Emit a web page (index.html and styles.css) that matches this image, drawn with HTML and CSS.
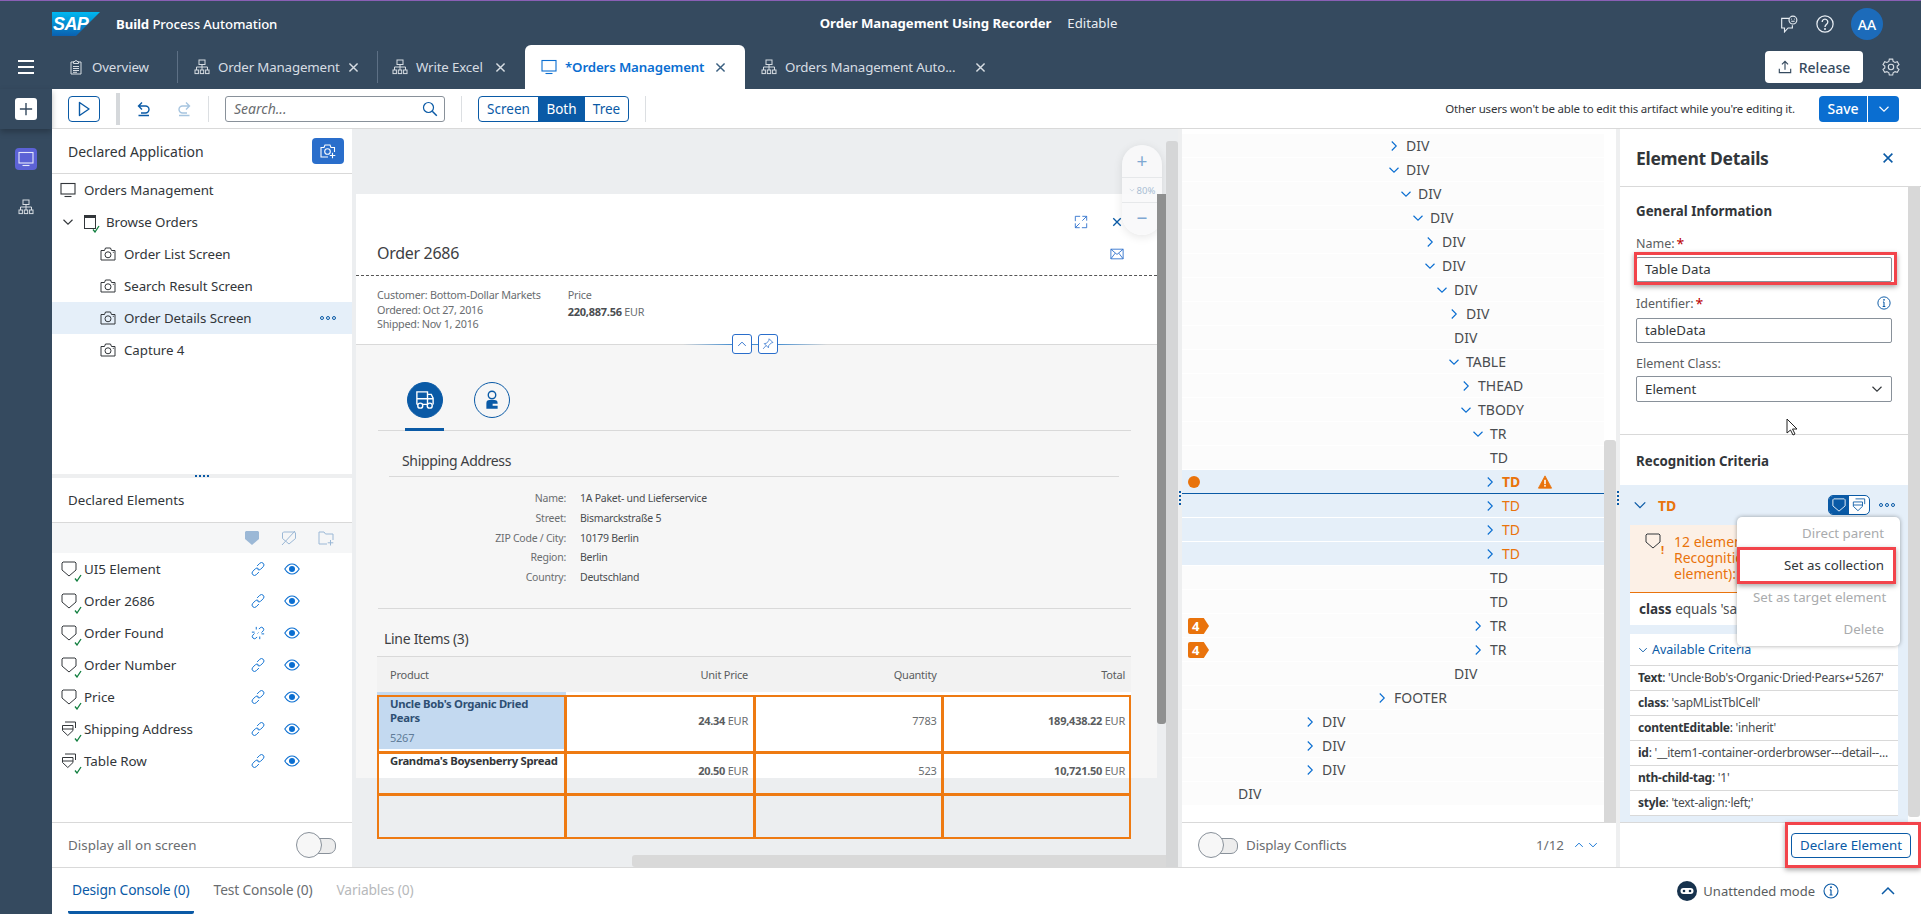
FILE: index.html
```html
<!DOCTYPE html>
<html lang="en">
<head>
<meta charset="utf-8">
<title>Build Process Automation</title>
<link rel="stylesheet" href="styles.css">
</head>
<body>
<svg class="defs" width="0" height="0" aria-hidden="true">
  <symbol id="i-monitor" viewBox="0 0 16 16"><rect x="1" y="1.5" width="14" height="10.5" fill="none" stroke="currentColor" stroke-width="1.1"/><path d="M4.5 14.5h7" stroke="currentColor" stroke-width="1.1"/></symbol>
  <symbol id="i-org" viewBox="0 0 16 16"><g fill="none" stroke="currentColor" stroke-width="1"><rect x="5" y="1" width="6" height="4.5"/><path d="M8 5.5V8M2.5 11V8h11v3M8 8v3"/><rect x="1" y="11" width="3.4" height="3.6"/><rect x="6.3" y="11" width="3.4" height="3.6"/><rect x="11.6" y="11" width="3.4" height="3.6"/></g></symbol>
  <symbol id="i-clip" viewBox="0 0 16 16"><g fill="none" stroke="currentColor" stroke-width="1"><path d="M5 3H3v12h10V3h-2"/><path d="M5.5 4.5V2.5h1.5a1 1 0 0 1 2 0h1.500v2z"/><path d="M5 7.500h6M5 9.500h6M5 11.500h6M5 13.300h4"/></g></symbol>
  <symbol id="i-x" viewBox="0 0 16 16"><path d="M3 3l10 10M13 3L3 13" stroke="currentColor" stroke-width="1.800" fill="none"/></symbol>
  <symbol id="i-play" viewBox="0 0 16 16"><path d="M3.500 1.500v13L13 8z" fill="none" stroke="currentColor" stroke-width="1.400" stroke-linejoin="round"/></symbol>
  <symbol id="i-undo" viewBox="0 0 16 16"><path d="M6 1.500L2.500 5 6 8.500M3 5h6.500a3.500 3.500 0 0 1 0 7H5M2.500 14.500H13" fill="none" stroke="currentColor" stroke-width="1.400"/></symbol>
  <symbol id="i-redo" viewBox="0 0 16 16"><path d="M10 1.500L13.500 5 10 8.500M13 5H6.500a3.500 3.500 0 0 0 0 7H11M3 14.500h10.500" fill="none" stroke="currentColor" stroke-width="1.400"/></symbol>
  <symbol id="i-search" viewBox="0 0 16 16"><circle cx="6.500" cy="6.500" r="5" fill="none" stroke="currentColor" stroke-width="1.200"/><path d="M10.300 10.300l4.500 4.500" stroke="currentColor" stroke-width="1.500"/></symbol>
  <symbol id="i-camera" viewBox="0 0 16 16"><g fill="none" stroke="currentColor" stroke-width="1"><path d="M1 4.500h3.500l1-2.500h5l1 2.500H15v9.500H1z"/><circle cx="8" cy="8.800" r="3"/><path d="M12.800 6.300h1"/></g></symbol>
  <symbol id="i-camplus" viewBox="0 0 16 16"><g fill="none" stroke="currentColor" stroke-width="1.100"><path d="M8 14H1V4.500h3L5 2h5l1 2.500h3.500V9"/><circle cx="7.500" cy="8.500" r="2.800"/><path d="M12.500 9.800v5.500M9.800 12.500h5.500"/></g></symbol>
  <symbol id="i-check" viewBox="0 0 8 8"><path d="M1 4.500L3 7l4-6" fill="none" stroke="currentColor" stroke-width="1.300"/></symbol>
  <symbol id="i-shield" viewBox="0 0 16 16"><path d="M2 1h12l1 1v7l-7 6-7-6V2z" fill="none" stroke="currentColor" stroke-width="1"/></symbol>
  <symbol id="i-shield-solid" viewBox="0 0 16 16"><path d="M2 1h12l1 1v7l-7 6-7-6V2z" fill="currentColor"/></symbol>
  <symbol id="i-shields" viewBox="0 0 16 16"><g fill="none" stroke="currentColor" stroke-width="1"><path d="M4 1h10.500v6"/><path d="M1.500 4.500h10.500v5l-5.200 5L1.500 9.500zM1.500 8H12"/></g></symbol>
  <symbol id="i-noshield" viewBox="0 0 16 16"><g fill="none" stroke="currentColor" stroke-width="1"><path d="M2.500 2h11l1 1v5.500L8 14 1.500 8.500V3z"/><path d="M1 15L14 1"/></g></symbol>
  <symbol id="i-folderplus" viewBox="0 0 16 16"><path d="M9 14H1V2h5l1.500 2H15v6M12.500 10v5.500M9.700 12.800h5.600" fill="none" stroke="currentColor" stroke-width="1"/></symbol>
  <symbol id="i-link" viewBox="0 0 16 16"><g fill="none" stroke="currentColor" stroke-width="1.100"><path d="M7 4.500l3-3a2.600 2.600 0 0 1 4 3.800l-3 3a2.600 2.600 0 0 1-3.600 0"/><path d="M9 11.500l-3 3a2.600 2.600 0 0 1-4-3.800l3-3a2.600 2.600 0 0 1 3.600 0"/></g></symbol>
  <symbol id="i-unlink" viewBox="0 0 16 16"><g fill="none" stroke="currentColor" stroke-width="1.100"><path d="M9 3.500l1.500-1.500a2.500 2.500 0 0 1 3.500 3.500L12 7.500"/><path d="M7 12.500L5.500 14A2.500 2.500 0 0 1 2 10.500L4 8.500"/><path d="M1 7h3M12 9h3M6 1v3M10 12v3M8.500 7.500l-1 1"/></g></symbol>
  <symbol id="i-eye" viewBox="0 0 16 16"><path d="M.8 8C3 4.500 5.500 3 8 3s5 1.500 7.200 5C13 11.500 10.500 13 8 13S3 11.500.8 8z" fill="none" stroke="currentColor" stroke-width="1.100"/><circle cx="8" cy="8" r="3" fill="currentColor"/></symbol>
  <symbol id="i-expand" viewBox="0 0 16 16"><path d="M7 1.500H1.500V7M9.500 1.500h5v5M9.500 6.500l5-5M1.500 9.500v5h5M1.500 14.500l5-5M14.500 9.500v5H9" fill="none" stroke="currentColor" stroke-width="1"/></symbol>
  <symbol id="i-mail" viewBox="0 0 16 16"><path d="M1 2.500h14v11H1zM1 2.500l7 6 7-6M1 13.500l5-6.500M15 13.500L10 7" fill="none" stroke="currentColor" stroke-width="1"/></symbol>
  <symbol id="i-pin" viewBox="0 0 16 16"><path d="M9.500 1l5 5-2 .5L9 10l-.5 3L3 7.500l3-.5 3-3.500zM5.500 10L1.500 14.500" fill="none" stroke="currentColor" stroke-width="1"/></symbol>
  <symbol id="i-truck" viewBox="0 0 16 16"><g fill="none" stroke="currentColor" stroke-width="1.100"><path d="M1.500 11.500V1.500h8.500v10M10 3.500h3l1.500 3v5M1.500 11.500h1M6 11.500h4M1.500 7h8.500M10 7h4.500"/><circle cx="4.200" cy="12.500" r="2"/><circle cx="11.800" cy="12.500" r="2"/></g></symbol>
  <symbol id="i-user" viewBox="0 0 16 16"><circle cx="8" cy="4" r="3" fill="none" stroke="currentColor" stroke-width="1.100"/><path d="M3.500 15V10.500A2.500 2.500 0 0 1 6 8h4a2.500 2.500 0 0 1 2.500 2.500V11H8.500v1.500h4V15z" fill="currentColor"/></symbol>
  <symbol id="i-warn" viewBox="0 0 16 16"><path d="M8 1L15.500 15H.5z" fill="currentColor" stroke="currentColor" stroke-linejoin="round"/><rect x="7.100" y="5.500" width="1.800" height="5" fill="#fff"/><rect x="7.100" y="11.500" width="1.800" height="1.800" fill="#fff"/></symbol>
  <symbol id="i-feedback" viewBox="0 0 16 16"><g fill="none" stroke="currentColor" stroke-width="1"><path d="M8 3H1.500v8.500H4V15l3.200-3.500H11V9"/><circle cx="11.500" cy="4.500" r="3.500"/><path d="M10 3.700h.6M12.400 3.700h.6M10 5.500h3"/></g></symbol>
  <symbol id="i-help" viewBox="0 0 16 16"><circle cx="8" cy="8" r="7.200" fill="none" stroke="currentColor" stroke-width="1.100"/><path d="M5.500 6.200a2.500 2.500 0 1 1 3.800 2.100C8.300 9 8 9.500 8 10.600" fill="none" stroke="currentColor" stroke-width="1.200"/><circle cx="8" cy="12.400" r=".9" fill="currentColor"/></symbol>
  <symbol id="i-info" viewBox="0 0 16 16"><circle cx="8" cy="8" r="7" fill="none" stroke="currentColor" stroke-width="1.100"/><path d="M8 6.800V12M6.500 12h3M6.800 6.800H8" fill="none" stroke="currentColor" stroke-width="1.200"/><circle cx="8" cy="4.300" r="1" fill="currentColor"/></symbol>
  <symbol id="i-gear" viewBox="0 0 16 16"><path d="M6.500 1h3l.4 2 1.700 1 2-.7 1.500 2.600-1.600 1.300v1.700l1.600 1.300-1.500 2.600-2-.7-1.700 1-.4 2h-3l-.4-2-1.700-1-2 .7L.9 10.200l1.600-1.300V7.200L.9 5.900l1.500-2.600 2 .7 1.700-1z" fill="none" stroke="currentColor" stroke-width="1"/><circle cx="8" cy="8" r="2.400" fill="none" stroke="currentColor" stroke-width="1"/></symbol>
  <symbol id="i-upload" viewBox="0 0 16 16"><path d="M8 11V1.500M4.500 5L8 1.500 11.500 5M1.500 10v4.500h13V10" fill="none" stroke="currentColor" stroke-width="1.300"/></symbol>
  <symbol id="i-down" viewBox="0 0 16 16"><path d="M2 5l6 6 6-6" fill="none" stroke="currentColor" stroke-width="1.500"/></symbol>
  <symbol id="i-right" viewBox="0 0 16 16"><path d="M5 2l6 6-6 6" fill="none" stroke="currentColor" stroke-width="1.500"/></symbol>
  <symbol id="i-up" viewBox="0 0 16 16"><path d="M2 11l6-6 6 6" fill="none" stroke="currentColor" stroke-width="1.500"/></symbol>
</svg>

<header class="shell">
  <div class="shell-top">
    <div class="brand">
      <svg class="sap-logo" viewBox="0 0 48 24" aria-hidden="true"><defs><linearGradient id="sapg" x1="0" y1="0" x2="0" y2="1"><stop offset="0" stop-color="#00b8f1"/><stop offset="1" stop-color="#0a60b0"/></linearGradient></defs><path d="M0 0h48L24 24H0z" fill="url(#sapg)"/><text x="1" y="18" class="sap-word">SAP</text></svg>
      <span class="product"><b>Build</b> Process Automation</span>
    </div>
    <div class="doc-title"><b>Order Management Using Recorder</b><span>Editable</span></div>
    <div class="shell-actions">
      <svg class="ic18"><use href="#i-feedback"/></svg>
      <svg class="ic18"><use href="#i-help"/></svg>
      <span class="avatar">AA</span>
    </div>
  </div>
  <div class="shell-tabs">
    <button class="burger" aria-label="Menu"><span></span><span></span><span></span></button>
    <div class="tab tab-sep w-over"><svg class="ic16"><use href="#i-clip"/></svg><span>Overview</span></div>
    <div class="tab tab-sep w-om"><svg class="ic16"><use href="#i-org"/></svg><span>Order Management</span><svg class="tab-x"><use href="#i-x"/></svg></div>
    <div class="tab w-we"><svg class="ic16"><use href="#i-org"/></svg><span>Write Excel</span><svg class="tab-x"><use href="#i-x"/></svg></div>
    <div class="tab tab-active w-act"><svg class="ic16"><use href="#i-monitor"/></svg><span>*Orders Management</span><svg class="tab-x"><use href="#i-x"/></svg></div>
    <div class="tab tab-last w-last"><svg class="ic16"><use href="#i-org"/></svg><span>Orders Management Auto...</span><svg class="tab-x"><use href="#i-x"/></svg></div>
    <button class="release"><svg class="ic14"><use href="#i-upload"/></svg>Release</button>
    <svg class="gear"><use href="#i-gear"/></svg>
  </div>
</header>

<div class="frame">
  <nav class="rail">
    <div class="rail-top"><button class="rail-plus" aria-label="Add"><svg viewBox="0 0 16 16"><path d="M8 1v14M1 8h14" stroke="currentColor" stroke-width="1.600"/></svg></button></div>
    <button class="rail-screen" aria-label="Screens"><svg class="ic16"><use href="#i-monitor"/></svg></button>
    <svg class="rail-org"><use href="#i-org"/></svg>
  </nav>

  <main class="main">
    <div class="toolbar">
      <button class="tb-play" aria-label="Run"><svg class="ic16"><use href="#i-play"/></svg></button>
      <span class="tb-bar"></span>
      <svg class="tb-undo"><use href="#i-undo"/></svg>
      <svg class="tb-redo"><use href="#i-redo"/></svg>
      <span class="tb-sep sep-a"></span>
      <div class="search"><span>Search...</span><svg class="ic16"><use href="#i-search"/></svg></div>
      <span class="tb-sep sep-b"></span>
      <div class="segment"><span class="seg-screen">Screen</span><span class="seg-both">Both</span><span class="seg-tree">Tree</span></div>
      <span class="tb-sep sep-c"></span>
      <span class="notice">Other users won't be able to edit this artifact while you're editing it.</span>
      <div class="save"><span class="save-main">Save</span><span class="save-arrow"><svg class="ic12"><use href="#i-down"/></svg></span></div>
    </div>

    <div class="workspace">
      <aside class="left">
        <div class="panel-head head-app"><span>Declared Application</span><button class="cap-btn" aria-label="Capture"><svg class="ic16"><use href="#i-camplus"/></svg></button></div>
        <div class="app-tree">
          <div class="node"><svg class="ic16 mr"><use href="#i-monitor"/></svg>Orders Management</div>
          <div class="node"><svg class="ic12 chev-dark"><use href="#i-down"/></svg><span class="win"><i></i><svg class="chk"><use href="#i-check"/></svg></span>Browse Orders</div>
          <div class="node sub"><svg class="ic16 mr"><use href="#i-camera"/></svg>Order List Screen</div>
          <div class="node sub"><svg class="ic16 mr"><use href="#i-camera"/></svg>Search Result Screen</div>
          <div class="node sub node-sel"><svg class="ic16 mr"><use href="#i-camera"/></svg>Order Details Screen<span class="dots"><i></i><i></i><i></i></span></div>
          <div class="node sub"><svg class="ic16 mr"><use href="#i-camera"/></svg>Capture 4</div>
        </div>
        <div class="splitter"><i></i><i></i><i></i><i></i></div>
        <div class="panel-head head-el"><span>Declared Elements</span></div>
        <div class="el-tools"><svg class="ic16"><use href="#i-shield-solid"/></svg><svg class="ic16"><use href="#i-noshield"/></svg><svg class="ic16"><use href="#i-folderplus"/></svg></div>
        <div class="el-list">
          <div class="el"><span class="el-ic"><svg class="ic16"><use href="#i-shield"/></svg><svg class="chk"><use href="#i-check"/></svg></span><span class="el-name">UI5 Element</span><svg class="ic14 act-link"><use href="#i-link"/></svg><svg class="ic16 act-eye"><use href="#i-eye"/></svg></div>
          <div class="el"><span class="el-ic"><svg class="ic16"><use href="#i-shield"/></svg><svg class="chk"><use href="#i-check"/></svg></span><span class="el-name">Order 2686</span><svg class="ic14 act-link"><use href="#i-link"/></svg><svg class="ic16 act-eye"><use href="#i-eye"/></svg></div>
          <div class="el"><span class="el-ic"><svg class="ic16"><use href="#i-shield"/></svg><svg class="chk"><use href="#i-check"/></svg></span><span class="el-name">Order Found</span><svg class="ic14 act-link"><use href="#i-unlink"/></svg><svg class="ic16 act-eye"><use href="#i-eye"/></svg></div>
          <div class="el"><span class="el-ic"><svg class="ic16"><use href="#i-shield"/></svg><svg class="chk"><use href="#i-check"/></svg></span><span class="el-name">Order Number</span><svg class="ic14 act-link"><use href="#i-link"/></svg><svg class="ic16 act-eye"><use href="#i-eye"/></svg></div>
          <div class="el"><span class="el-ic"><svg class="ic16"><use href="#i-shield"/></svg><svg class="chk"><use href="#i-check"/></svg></span><span class="el-name">Price</span><svg class="ic14 act-link"><use href="#i-link"/></svg><svg class="ic16 act-eye"><use href="#i-eye"/></svg></div>
          <div class="el"><span class="el-ic"><svg class="ic16"><use href="#i-shields"/></svg><svg class="chk"><use href="#i-check"/></svg></span><span class="el-name">Shipping Address</span><svg class="ic14 act-link"><use href="#i-link"/></svg><svg class="ic16 act-eye"><use href="#i-eye"/></svg></div>
          <div class="el"><span class="el-ic"><svg class="ic16"><use href="#i-shields"/></svg><svg class="chk"><use href="#i-check"/></svg></span><span class="el-name">Table Row</span><svg class="ic14 act-link"><use href="#i-link"/></svg><svg class="ic16 act-eye"><use href="#i-eye"/></svg></div>
        </div>
        <div class="panel-foot"><span>Display all on screen</span><span class="switch"><i></i></span></div>
      </aside>

      <section class="canvas">
        <article class="sheet">
          <div class="sheet-tools"><svg class="ic14"><use href="#i-expand"/></svg><svg class="ic12 sheet-x"><use href="#i-x"/></svg></div>
          <div class="sheet-title"><h2>Order 2686</h2><svg class="ic14"><use href="#i-mail"/></svg></div>
          <div class="sheet-head">
            <div class="attrs"><span>Customer: Bottom-Dollar Markets</span><span>Ordered: Oct 27, 2016</span><span>Shipped: Nov 1, 2016</span></div>
            <div class="attrs price"><span>Price</span><span class="amount"><b>220,887.56</b> EUR</span></div>
          </div>
          <div class="collapse"><span class="c-btn"><svg class="ic10"><use href="#i-up"/></svg></span><span class="c-btn"><svg class="ic12"><use href="#i-pin"/></svg></span></div>
          <div class="sheet-body">
            <div class="icon-tabs">
              <div class="itab itab-on"><span class="circle"><svg class="ic20"><use href="#i-truck"/></svg></span></div>
              <div class="itab"><span class="circle"><svg class="ic20"><use href="#i-user"/></svg></span></div>
            </div>
            <div class="addr">
              <h3>Shipping Address</h3>
              <dl>
                <dt>Name:</dt><dd>1A Paket- und Lieferservice</dd>
                <dt>Street:</dt><dd>Bismarckstraße 5</dd>
                <dt>ZIP Code / City:</dt><dd>10179 Berlin</dd>
                <dt>Region:</dt><dd>Berlin</dd>
                <dt>Country:</dt><dd>Deutschland</dd>
              </dl>
            </div>
            <h3 class="items-title">Line Items (3)</h3>
            <table class="items">
              <thead><tr><th class="tl">Product</th><th>Unit Price</th><th>Quantity</th><th>Total</th></tr></thead>
              <tbody>
                <tr class="r1"><td class="tl picked"><b>Uncle Bob's Organic Dried<br>Pears</b><small>5267</small></td><td><b>24.34</b> EUR</td><td>7783</td><td><b>189,438.22</b> EUR</td></tr>
                <tr class="r2"><td class="tl"><b>Grandma's Boysenberry Spread</b></td><td><b>20.50</b> EUR</td><td>523</td><td><b>10,721.50</b> EUR</td></tr>
              </tbody>
            </table>
          </div>
        </article>
        <div class="hi-grid"><i></i><i></i><i></i><i></i><i></i><i></i><i></i><i></i><i></i><i></i><i></i><i></i></div>
        <div class="zoom-pill"><span class="z-plus">+</span><span class="z-val"><svg class="ic6"><use href="#i-down"/></svg>80%</span><span class="z-minus">−</span></div>
        <span class="vbar-track"></span><span class="vbar-thumb"></span><span class="hbar"></span>
      </section>

      <div class="gutter"><span class="grip"><i></i><i></i><i></i><i></i></span></div>

      <section class="dom">
        <div class="dom-tree">
          <div class="row d14"><svg class="ch"><use href="#i-right"/></svg>DIV</div>
          <div class="row d14"><svg class="ch"><use href="#i-down"/></svg>DIV</div>
          <div class="row d15"><svg class="ch"><use href="#i-down"/></svg>DIV</div>
          <div class="row d16"><svg class="ch"><use href="#i-down"/></svg>DIV</div>
          <div class="row d17"><svg class="ch"><use href="#i-right"/></svg>DIV</div>
          <div class="row d17"><svg class="ch"><use href="#i-down"/></svg>DIV</div>
          <div class="row d18"><svg class="ch"><use href="#i-down"/></svg>DIV</div>
          <div class="row d19"><svg class="ch"><use href="#i-right"/></svg>DIV</div>
          <div class="row d18">DIV</div>
          <div class="row d19"><svg class="ch"><use href="#i-down"/></svg>TABLE</div>
          <div class="row d20"><svg class="ch"><use href="#i-right"/></svg>THEAD</div>
          <div class="row d20"><svg class="ch"><use href="#i-down"/></svg>TBODY</div>
          <div class="row d21"><svg class="ch"><use href="#i-down"/></svg>TR</div>
          <div class="row d21">TD</div>
          <div class="row d22 row-on row-main"><span class="dot"></span><svg class="ch"><use href="#i-right"/></svg><b>TD</b><svg class="warn"><use href="#i-warn"/></svg></div>
          <div class="row d22 row-on"><svg class="ch"><use href="#i-right"/></svg>TD</div>
          <div class="row d22 row-on"><svg class="ch"><use href="#i-right"/></svg>TD</div>
          <div class="row d22 row-on"><svg class="ch"><use href="#i-right"/></svg>TD</div>
          <div class="row d21">TD</div>
          <div class="row d21">TD</div>
          <div class="row d21"><span class="tag">4</span><svg class="ch"><use href="#i-right"/></svg>TR</div>
          <div class="row d21"><span class="tag">4</span><svg class="ch"><use href="#i-right"/></svg>TR</div>
          <div class="row d18">DIV</div>
          <div class="row d13"><svg class="ch"><use href="#i-right"/></svg>FOOTER</div>
          <div class="row d7"><svg class="ch"><use href="#i-right"/></svg>DIV</div>
          <div class="row d7"><svg class="ch"><use href="#i-right"/></svg>DIV</div>
          <div class="row d7"><svg class="ch"><use href="#i-right"/></svg>DIV</div>
          <div class="row d0">DIV</div>
        </div>
        <span class="dom-scroll"></span>
        <div class="panel-foot dom-foot"><span class="switch"><i></i></span><span class="dc">Display Conflicts</span><span class="count">1/12</span><svg class="ic10"><use href="#i-up"/></svg><svg class="ic10"><use href="#i-down"/></svg></div>
      </section>

      <div class="gutter"><span class="grip"><i></i><i></i><i></i><i></i></span></div>

      <aside class="details">
        <div class="det-head"><h2>Element Details</h2><svg class="ic14"><use href="#i-x"/></svg></div>
        <div class="det-scroll">
          <div class="det-body">
            <section class="general">
              <h3>General Information</h3>
              <label class="lab lab-name">Name:<em>*</em></label>
              <div class="input">Table Data</div>
              <label class="lab lab-id">Identifier:<em>*</em><svg class="ic14"><use href="#i-info"/></svg></label>
              <div class="input">tableData</div>
              <label class="lab lab-class">Element Class:</label>
              <div class="input select">Element<svg class="ic14"><use href="#i-down"/></svg></div>
            </section>
            <section class="recog">
              <h3>Recognition Criteria</h3>
              <div class="crit">
                <div class="crit-head">
                  <svg class="ic14"><use href="#i-down"/></svg><b>TD</b>
                  <span class="mini-seg"><span class="ms-on"><svg class="ic14"><use href="#i-shield"/></svg></span><span><svg class="ic14"><use href="#i-shields"/></svg></span></span>
                  <span class="dots"><i></i><i></i><i></i></span>
                </div>
                <div class="crit-warn"><span class="w-ic"><svg class="ic16"><use href="#i-shield"/></svg><em>!</em></span><p>12 elements found using this<br>Recognition Criteria (target<br>element):</p></div>
                <div class="crit-line"><b>class</b> equals 'sapMListTblCell'</div>
                <div class="avail">
                  <div class="avail-head"><svg class="ic10"><use href="#i-down"/></svg>Available Criteria</div>
                  <div class="av"><b>Text</b>: <span>'Uncle·Bob's·Organic·Dried·Pears↵5267'</span></div>
                  <div class="av"><b>class</b>: <span>'sapMListTblCell'</span></div>
                  <div class="av"><b>contentEditable</b>: <span>'inherit'</span></div>
                  <div class="av"><b>id</b>: <span>'__item1-container-orderbrowser---detail--...</span></div>
                  <div class="av"><b>nth-child-tag</b>: <span>'1'</span></div>
                  <div class="av"><b>style</b>: <span>'text-align:·left;'</span></div>
                </div>
              </div>
            </section>
          </div>
          <span class="det-track"></span>
        </div>
        <div class="det-foot"><button class="declare">Declare Element</button></div>

        <div class="menu">
          <span class="off">Direct parent</span>
          <span>Set as collection</span>
          <span class="off">Set as target element</span>
          <span class="off">Delete</span>
        </div>
        <span class="mark mark-name"></span>
        <span class="mark mark-menu"></span>
        <span class="mark mark-declare"></span>
        <svg class="cursor" viewBox="0 0 12 18"><path d="M1 1v14l3.500-3 2.500 5 2-1-2.500-5H11z" fill="#fff" stroke="#222" stroke-width="1"/></svg>
      </aside>
    </div>

    <footer class="console">
      <span class="con-tab con-on">Design Console (0)</span>
      <span class="con-tab">Test Console (0)</span>
      <span class="con-tab con-off">Variables (0)</span>
      <span class="unattended"><svg class="robot" viewBox="0 0 20 20"><circle cx="10" cy="10" r="10" fill="#17324d"/><rect x="3.500" y="7" width="13" height="6" rx="3" fill="#fff"/><circle cx="7" cy="10" r="1.300" fill="#17324d"/><circle cx="13" cy="10" r="1.300" fill="#17324d"/></svg>Unattended mode<svg class="ic16 un-info"><use href="#i-info"/></svg></span>
      <svg class="ic16 con-up"><use href="#i-up"/></svg>
    </footer>
  </main>
</div>
</body>
</html>
```
FILE: styles.css
```css
* { box-sizing: border-box; }
html, body { margin: 0; height: 100%; }
body { width: 1921px; height: 914px; overflow: hidden; display: flex; flex-direction: column; font-family: "Noto Sans", "Liberation Sans", sans-serif; font-size: 14px; color: #32363a; background: #fff; }
.defs { position: absolute; }
button { font: inherit; padding: 0; border: 0; background: none; }
h2, h3, p, dl, dd { margin: 0; font-weight: inherit; }
svg { flex: none; display: block; }
.ic6 { width: 6px; height: 6px; }
.ic10 { width: 10px; height: 10px; }
.ic12 { width: 12px; height: 12px; }
.ic14 { width: 14px; height: 14px; }
.ic16 { width: 16px; height: 16px; }
.ic18 { width: 18px; height: 18px; }
.ic20 { width: 20px; height: 20px; }

/* shell */
.shell { height: 89px; flex: none; background: #354a5f; border-top: 1px solid #8a5fb5; color: #fff; display: flex; flex-direction: column; }
.shell-top { height: 44px; display: grid; grid-template-columns: 1fr auto 1fr; align-items: center; padding-left: 52px; }
.brand { display: flex; align-items: center; gap: 16px; margin-top: 2px; }
.sap-logo { width: 48px; height: 24px; }
.sap-word { font: italic 700 18px "Liberation Sans", sans-serif; fill: #fff; letter-spacing: -.6px; }
.product { font-size: 13.200px; font-weight: 500; letter-spacing: -.1px; }
.product b { font-weight: 700; }
.doc-title { display: flex; gap: 16px; font-size: 13.200px; margin-right: 36px; margin-top: -1px; }
.doc-title b { font-weight: 700; letter-spacing: -.05px; }
.doc-title span { color: #e8edf2; }
.shell-actions { display: flex; justify-content: flex-end; align-items: center; padding-right: 38px; margin-top: 2px; color: #e8eef4; }
.shell-actions svg:nth-child(2) { margin-left: 18px; }
.avatar { width: 32px; height: 32px; border-radius: 50%; background: #1c6bba; color: #fff; margin-left: 17px; display: flex; align-items: center; justify-content: center; font-size: 14px; font-weight: 500; }
.shell-tabs { height: 44px; display: flex; align-items: stretch; }
.burger { width: 52px; display: flex; flex-direction: column; justify-content: center; gap: 4px; padding: 0 18px; }
.burger span { height: 2px; background: #fff; }
.tab { display: flex; align-items: center; padding-left: 16px; color: #d7dde3; font-size: 13.300px; position: relative; white-space: nowrap; height: 44px; }
.tab > span { margin-left: 8px; letter-spacing: -.15px; }
.tab-x { width: 13px; height: 13px; margin-left: auto; margin-right: 18px; }
.tab-sep::after { content: ""; position: absolute; right: 0; top: 6px; bottom: 6px; width: 1px; background: #5d7085; }
.w-over { width: 126px; }
.w-om { width: 200px; }
.w-we { width: 147px; padding-left: 14px; }
.w-act { width: 220px; background: #fff; color: #0a6ed1; border-radius: 6px 6px 0 0; font-weight: 600; }
.w-act .ic16 { color: #0a6ed1; }
.w-act .tab-x { color: #3a5f80; }
.w-last { width: 260px; }
.release { margin-left: auto; width: 98px; height: 32px; margin-top: 6px; background: #fff; border-radius: 4px; color: #354a5f; display: flex; align-items: center; justify-content: center; gap: 7px; font-size: 14px; font-weight: 500; }
.gear { width: 18px; height: 18px; margin: 13px 21px 0 19px; color: #d7dde3; }

/* frame */
.frame { flex: 1; display: flex; min-height: 0; }
.rail { width: 52px; flex: none; background: #354a5f; display: flex; flex-direction: column; align-items: center; }
.rail-top { width: 100%; height: 40px; box-shadow: 0 3px 6px rgba(0,0,0,.25); display: flex; justify-content: center; align-items: center; }
.rail-plus { width: 22px; height: 22px; border-radius: 3px; background: #fff; color: #354a5f; display: flex; align-items: center; justify-content: center; }
.rail-plus svg { width: 14px; height: 14px; }
.rail-screen { width: 22px; height: 22px; margin-top: 19px; background: #5c62d6; border-radius: 4px; color: #e6e8fb; display: flex; align-items: center; justify-content: center; }
.rail-org { width: 16px; height: 16px; margin-top: 29px; color: #d7dde3; }
.main { flex: 1; min-width: 0; display: flex; flex-direction: column; }

/* toolbar */
.toolbar { height: 40px; flex: none; border-bottom: 1px solid #d9d9d9; display: flex; align-items: center; padding-left: 16px; }
.tb-play { width: 32px; height: 26px; border: 1px solid #0a5aa6; border-radius: 4px; color: #0a5aa6; display: flex; align-items: center; justify-content: center; }
.tb-bar { width: 4px; height: 32px; background: #d5d8db; margin-left: 16px; }
.tb-undo, .tb-redo { width: 16px; height: 16px; }
.tb-undo { margin-left: 16px; color: #0a5aa6; }
.tb-redo { margin-left: 24px; color: #a7c5e0; }
.tb-sep { width: 1px; height: 26px; background: #dcdfe2; }
.sep-a { margin-left: 16px; }
.search { margin-left: 16px; width: 220px; height: 26px; border: 1px solid #89919a; border-radius: 3px; display: flex; align-items: center; justify-content: space-between; padding: 0 6px 0 8px; font-style: italic; color: #6a6d70; font-size: 14px; }
.search svg { color: #0a5aa6; font-style: normal; }
.sep-b { margin-left: 16px; }
.segment { margin-left: 16px; height: 26px; border: 1px solid #0a5aa6; border-radius: 4px; display: flex; align-items: center; overflow: hidden; width: 151px; color: #0a5aa6; font-size: 13.500px; text-align: center; }
.segment span { line-height: 24px; }
.seg-screen { width: 59px; }
.seg-both { width: 47px; background: #0a5aa6; color: #fff; }
.seg-tree { flex: 1; }
.sep-c { margin-left: 16px; }
.notice { margin-left: auto; font-size: 11.500px; color: #32363a; letter-spacing: -.18px; }
.save { margin-left: 24px; margin-right: 22px; display: flex; height: 26px; color: #fff; font-size: 14px; }
.save-main { width: 48px; background: #0a6ed1; border-radius: 4px 0 0 4px; text-align: center; line-height: 26px; font-weight: 500; }
.save-arrow { width: 31px; margin-left: 1px; background: #0a6ed1; border-radius: 0 4px 4px 0; display: flex; align-items: center; justify-content: center; }

.workspace { flex: 1; min-height: 0; display: flex; border-bottom: 1px solid #d9d9d9; }

/* left */
.left { width: 300px; flex: none; display: flex; flex-direction: column; background: #fff; }
.panel-head { display: flex; align-items: center; justify-content: space-between; padding: 0 8px 0 16px; flex: none; border-bottom: 1px solid #d9d9d9; font-size: 14px; }
.head-app { height: 45px; }
.head-el { height: 45px; font-size: 13.300px; }
.cap-btn { width: 32px; height: 26px; background: #2a6ecb; border-radius: 4px; color: #fff; display: flex; align-items: center; justify-content: center; }
.app-tree { height: 300px; flex: none; }
.node { height: 32px; display: flex; align-items: center; padding-left: 8px; font-size: 13.300px; position: relative; letter-spacing: -.05px; }
.mr { margin-right: 8px; }
.chev-dark { margin-left: 2px; margin-right: 10px; color: #32363a; }
.win { width: 12px; height: 14px; border: 1px solid #32363a; border-top: 3px solid #32363a; margin-right: 10px; position: relative; }
.chk { position: absolute; width: 8px; height: 8px; color: #107e3e; right: -5px; bottom: -5px; }
.sub { padding-left: 48px; }
.node-sel { background: #e5eff9; }
.dots { display: inline-flex; gap: 1.500px; }
.node-sel .dots { margin-left: auto; margin-right: 16px; }
.dots i { width: 4.500px; height: 4.500px; border: 1px solid #0a5aa6; border-radius: 50%; }
.splitter { height: 4px; background: #eeeff0; display: flex; justify-content: center; gap: 2px; flex: none; align-items: center; }
.splitter i { width: 2px; height: 2px; background: #0a5aa6; }
.el-tools { height: 30px; background: #f5f6f7; flex: none; display: flex; align-items: center; justify-content: flex-end; padding-right: 18px; gap: 21px; color: #9bb8d6; }
.el-list { flex: 1; }
.el { height: 32px; display: flex; align-items: center; padding-left: 9px; font-size: 13.400px; }
.el-ic { position: relative; width: 16px; height: 16px; margin-right: 7px; }
.el-name { width: 167px; letter-spacing: -.05px; }
.act-link { color: #0a6ed1; margin-left: 0; }
.act-eye { color: #0a6ed1; margin-left: 19px; }
.panel-foot { height: 45px; flex: none; border-top: 1px solid #d9d9d9; display: flex; align-items: center; justify-content: space-between; padding: 0 16px; color: #6a6d70; font-size: 13.400px; }
.switch { width: 40px; height: 26px; position: relative; display: block; }
.switch::before { content: ""; position: absolute; left: 14px; right: 0; top: 6px; height: 14px; border: 1px solid #89919a; border-radius: 7px; background: #ededed; }
.switch i { position: absolute; left: 0; top: 0; width: 26px; height: 26px; border-radius: 50%; background: #f7f7f7; border: 1px solid #89919a; }

/* canvas */
.canvas { width: 826px; flex: none; background: #eceef0; position: relative; overflow: hidden; padding: 65px 0 0 4px; }
.sheet { width: 801px; height: 584px; background: #fff; overflow: hidden; display: flex; flex-direction: column; color: #4a4d50; }
.sheet-tools { height: 35px; flex: none; display: flex; justify-content: flex-end; align-items: flex-end; gap: 23px; padding: 0 34px 0 0; color: #2a6ecb; }
.sheet-x { color: #0a5aa6; margin-bottom: 1px; }
.sheet-title { height: 47px; flex: none; display: flex; align-items: center; justify-content: space-between; padding: 4px 33px 0 21px; border-bottom: 1px dashed #555; color: #2a6ecb; }
.sheet-title h2 { font-size: 16px; color: #3d4043; letter-spacing: -.3px; margin-top: -2px; }
.sheet-head { height: 68px; flex: none; display: flex; gap: 27px; padding: 12px 0 0 21px; font-size: 10.800px; color: #6a6d70; }
.attrs { display: flex; flex-direction: column; line-height: 14.500px; letter-spacing: -.25px; }
.amount { margin-top: 2px; }
.amount b { color: #4a4d50; font-weight: 700; font-size: 11px; }
.collapse { height: 0; flex: none; display: flex; justify-content: center; align-items: center; gap: 6px; position: relative; z-index: 1; padding-right: 4px; }
.collapse::before { content: ""; position: absolute; left: 327px; width: 144px; top: 0; height: 1px; background: linear-gradient(90deg, transparent, #4a90d0, #4a90d0, transparent); }
.c-btn { position: relative; width: 20px; height: 20px; background: #fff; border: 1px solid #2a6ecb; border-radius: 3px; color: #2a6ecb; display: flex; align-items: center; justify-content: center; }
.sheet-body { flex: 1; background: #f6f6f6; border-top: 1px solid #d9d9d9; padding: 0 26px 0 21px; min-height: 0; }
.icon-tabs { height: 86px; margin-left: 1px; padding: 37px 0 0 27px; display: flex; gap: 28px; border-bottom: 1px solid #d9d9d9; align-items: flex-start; }
.itab { width: 39px; height: 49px; display: flex; justify-content: center; }
.itab-on { border-bottom: 3px solid #0a5aa6; }
.circle { width: 36px; height: 36px; border-radius: 50%; border: 1px solid #0a5aa6; display: flex; align-items: center; justify-content: center; color: #0a5aa6; background: #f6f6f6; }
.itab-on .circle { background: #0a5aa6; color: #fff; }
.addr { margin: 0 12px; padding-bottom: 20px; }
.addr h3 { height: 46px; padding: 21px 0 0 13px; font-size: 14px; line-height: 18px; border-bottom: 1px solid #d9d9d9; letter-spacing: -.35px; color: #3d4043; }
.addr dl { display: grid; grid-template-columns: 177px 1fr; column-gap: 14px; grid-auto-rows: 19.800px; margin-top: 12px; font-size: 10.500px; letter-spacing: -.25px; line-height: 19.800px; }
.addr dt { text-align: right; color: #6a6d70; }
.items-title { border-top: 1px solid #d9d9d9; margin-left: 1px; height: 48px; padding: 20px 0 0 6px; font-size: 14px; line-height: 20px; letter-spacing: -.3px; color: #3d4043; }
.items { width: 754px; border-collapse: collapse; table-layout: fixed; font-size: 11px; letter-spacing: -.25px; border-top: 1px solid #d9d9d9; }
.items th { height: 36px; background: #f2f2f2; font-weight: 400; text-align: right; padding: 0 6px 0 0; color: #5a5d60; }
.items td { text-align: right; padding: 0 6px 0 0; background: #fff; vertical-align: middle; color: #6a6d70; }
.items td b { font-weight: 700; color: #5a5d60; }
.items .tl { text-align: left; padding-left: 13px; }
.items td.tl b { display: block; font-size: 11.300px; line-height: 14px; color: #32363a; letter-spacing: -.3px; padding-top: 5px; white-space: nowrap; }
.r1 { height: 57px; }
.r2 { height: 42px; }
.items td.tl { vertical-align: top; }
.items td.picked { background: #c3d9f0; }
.items td.picked b { color: #2e4f73; }
.picked small { display: block; font-size: 11px; line-height: 14px; color: #5f7c99; margin-top: 6px; }
.hi-grid { position: absolute; left: 26px; top: 567px; width: 754px; height: 143px; display: grid; grid-template-columns: 188px 189px 188px 188px; grid-template-rows: 57px 42px 44px; }
.hi-grid i { border: 2px solid #ee7a12; margin: -1px 0 0 -1px; }
.zoom-pill { position: absolute; left: 770px; top: 16px; width: 40px; height: 90px; border-radius: 20px; background: rgba(248,249,250,.92); box-shadow: 0 2px 10px rgba(0,0,0,.1); display: flex; flex-direction: column; align-items: center; color: #7fa8d2; }
.z-plus { font-size: 19px; line-height: 32px; height: 32px; }
.z-val { height: 26px; width: 100%; display: flex; gap: 2px; align-items: center; justify-content: center; font-size: 9.500px; border-top: 1px solid #e6e8ea; border-bottom: 1px solid #e6e8ea; color: #a9bed4; }
.z-minus { font-size: 19px; line-height: 30px; font-weight: 500; }
.vbar-track { position: absolute; left: 814px; top: 12px; width: 12px; height: 726px; background: #d5d6d7; border-radius: 3px 3px 0 0; }
.vbar-thumb { position: absolute; left: 805px; top: 65px; width: 9px; height: 530px; background: #8f9090; border-radius: 0 0 3px 3px; }
.hbar { position: absolute; left: 280px; top: 726px; width: 534px; height: 12px; background: #d9d9d9; border-radius: 3px 0 0 3px; }

.gutter { width: 4px; flex: none; background: #eeeff0; position: relative; }
.grip { position: absolute; left: 1px; top: 362px; display: flex; flex-direction: column; gap: 2px; }
.grip i { width: 2px; height: 2px; background: #0a5aa6; }

/* dom tree */
.dom { width: 434px; flex: none; position: relative; display: flex; flex-direction: column; background: #fff; }
.dom-tree { flex: 1; padding: 5px 12px 0 0; min-height: 0; font-size: 14px; }
.row { height: 24px; display: flex; align-items: center; background: #fcfcfc; border-bottom: 1px solid #fff; color: #4a4d50; position: relative; }
.ch { width: 12px; height: 12px; margin-left: -18px; margin-right: 6px; color: #0a6ed1; }
.d0 { padding-left: 56px; }
.d7 { padding-left: 140px; }
.d13 { padding-left: 212px; }
.d14 { padding-left: 224px; }
.d15 { padding-left: 236px; }
.d16 { padding-left: 248px; }
.d17 { padding-left: 260px; }
.d18 { padding-left: 272px; }
.d19 { padding-left: 284px; }
.d20 { padding-left: 296px; }
.d21 { padding-left: 308px; }
.d22 { padding-left: 320px; }
.row-on { background: #e5eff9; color: #e9730c; border-bottom: 1px solid #fff; }
.row-main { border-bottom: 1px solid #0a5aa6; }
.row-main b { font-weight: 700; }
.warn { width: 16px; height: 14px; color: #e9730c; margin-left: 17px; }
.dot { position: absolute; left: 6px; top: 6px; width: 12px; height: 12px; border-radius: 50%; background: #e9730c; }
.tag { position: absolute; left: 6px; top: 4px; width: 21px; height: 16px; background: #e9730c; color: #fff; font-size: 13px; font-weight: 700; line-height: 16px; padding-left: 4px; clip-path: polygon(0 0, 75% 0, 100% 50%, 75% 100%, 0 100%); border-radius: 2px; }
.dom-scroll { position: absolute; right: 0; top: 311px; width: 12px; height: 382px; background: #d8d8d8; border-radius: 3px 3px 0 0; }
.dom-foot { justify-content: flex-start; }
.dc { margin-left: 8px; letter-spacing: -.15px; }
.count { margin-left: auto; margin-right: 10px; }
.dom-foot svg { color: #0a6ed1; }
.dom-foot svg + svg { margin-left: 4px; margin-right: 2px; }

/* details */
.details { flex: 1; min-width: 0; position: relative; display: flex; flex-direction: column; background: #fff; }
.det-head { height: 58px; flex: none; border-bottom: 1px solid #d9d9d9; display: flex; align-items: center; justify-content: space-between; padding: 0 26px 0 16px; }
.det-head h2 { font-size: 17.500px; font-weight: 700; color: #32363a; letter-spacing: -.3px; }
.det-head svg { color: #0a5aa6; }
.det-scroll { flex: 1; min-height: 0; display: flex; }
.det-body { width: 288px; flex: none; display: flex; flex-direction: column; }
.det-track { width: 12px; background: #d8d8d8; margin-bottom: 5px; border-radius: 0 0 3px 3px; }
.general { height: 248px; flex: none; padding: 14px 16px 0; border-bottom: 1px solid #d9d9d9; }
.general h3, .recog h3 { font-size: 13.300px; font-weight: 700; line-height: 20px; }
.lab { display: flex; align-items: center; height: 18px; color: #5a5d60; position: relative; font-size: 12.500px; }
.lab em { color: #bb0000; font-style: normal; margin-left: 2px; font-size: 14px; }
.lab svg { margin-left: auto; margin-right: 1px; color: #0a5aa6; }
.lab-name { margin-top: 13px; margin-bottom: 5px; }
.lab-id { margin-top: 12px; margin-bottom: 6px; }
.lab-class { margin-top: 11px; margin-bottom: 4px; }
.input { height: 25px; border: 1px solid #89919a; border-radius: 2px; padding: 0 8px; line-height: 23px; color: #32363a; display: flex; align-items: center; justify-content: space-between; font-size: 13.300px; }
.select { height: 26px; }
.select svg { color: #32363a; width: 12px; height: 12px; }
.recog { flex: 1; min-height: 0; display: flex; flex-direction: column; }
.recog h3 { height: 50px; flex: none; padding: 16px 16px 0; }
.crit { flex: 1; background: #e5eff9; padding: 0 10px; }
.crit-head { height: 40px; display: flex; align-items: center; padding-left: 3px; color: #0a5aa6; position: relative; }
.crit-head b { color: #e9730c; margin-left: 11px; }
.mini-seg { margin-left: auto; width: 42px; height: 20px; border: 1px solid #0a5aa6; border-radius: 5px; display: flex; overflow: hidden; background: #fff; }
.mini-seg span { flex: 1; display: flex; align-items: center; justify-content: center; }
.ms-on { background: #0a5aa6; color: #fff; }
.crit-head .dots { margin: 0 3px 0 9px; }
.crit-warn { height: 68px; background: #fcf0e6; border-bottom: 1px solid #e9730c; display: flex; color: #e9730c; padding: 8px 0 0 15px; font-size: 14px; line-height: 16px; }
.w-ic { position: relative; width: 16px; height: 16px; margin-right: 13px; color: #32363a; }
.w-ic em { position: absolute; right: -3px; bottom: -7px; color: #e9730c; font: 700 11px/12px "Noto Sans", sans-serif; }
.crit-warn p { margin-top: 1px; }
.crit-line { height: 32px; background: #fff; padding-left: 9px; line-height: 32px; margin-bottom: 9px; white-space: nowrap; overflow: hidden; color: #4a4d50; font-size: 13.500px; }
.crit-line b { color: #32363a; }
.avail { background: #fff; font-size: 12px; }
.avail-head { height: 32px; display: flex; align-items: center; gap: 4px; padding-left: 8px; color: #0a5aa6; border-bottom: 1px solid #d9d9d9; font-size: 12.500px; }
.av { height: 25px; line-height: 24px; padding-left: 8px; border-bottom: 1px solid #d9d9d9; white-space: nowrap; overflow: hidden; color: #32363a; letter-spacing: -.25px; }
.av b { font-weight: 700; }
.av span { color: #4a4d50; }
.det-foot { height: 45px; flex: none; border-top: 1px solid #d9d9d9; display: flex; justify-content: flex-end; align-items: center; padding-right: 10px; }
.declare { width: 120px; height: 25px; border: 1px solid #0a5aa6; border-radius: 4px; color: #0a5aa6; font-size: 13.300px; }
.menu { position: absolute; left: 117px; top: 388px; width: 163px; height: 129px; background: #fff; border-radius: 5px; box-shadow: 0 0 4px rgba(0,0,0,.35); display: flex; flex-direction: column; padding: 0 16px; text-align: right; font-size: 13.300px; }
.menu span { height: 32px; line-height: 32px; color: #32363a; white-space: nowrap; }
.menu .off { color: #a9abad; }
.mark { position: absolute; border: 3px solid #f2444b; box-shadow: 0 2px 5px rgba(0,0,0,.35); }
.mark-name { left: 14px; top: 123px; width: 263px; height: 33px; }
.mark-menu { left: 117px; top: 418px; width: 159px; height: 37px; }
.mark-declare { left: 165px; top: 693px; width: 136px; height: 46px; }
.cursor { position: absolute; left: 166px; top: 289px; width: 12px; height: 18px; }

/* console */
.console { height: 46px; flex: none; display: flex; align-items: center; padding-left: 16px; position: relative; }
.con-tab { height: 46px; line-height: 44px; margin-right: 16px; padding: 0 4px; color: #6a6d70; letter-spacing: -.15px; font-size: 13.800px; }
.con-on { color: #0a5aa6; border-bottom: 3px solid #0a5aa6; border-radius: 0 0 2px 2px; }
.con-off { color: #b7b9bb; }
.unattended { margin-left: auto; display: flex; align-items: center; color: #5a5d60; font-size: 13px; }
.robot { width: 20px; height: 20px; margin-right: 6px; }
.un-info { color: #0a5aa6; margin-left: 8px; }
.con-up { color: #0a5aa6; margin: 0 25px 0 41px; }
```
